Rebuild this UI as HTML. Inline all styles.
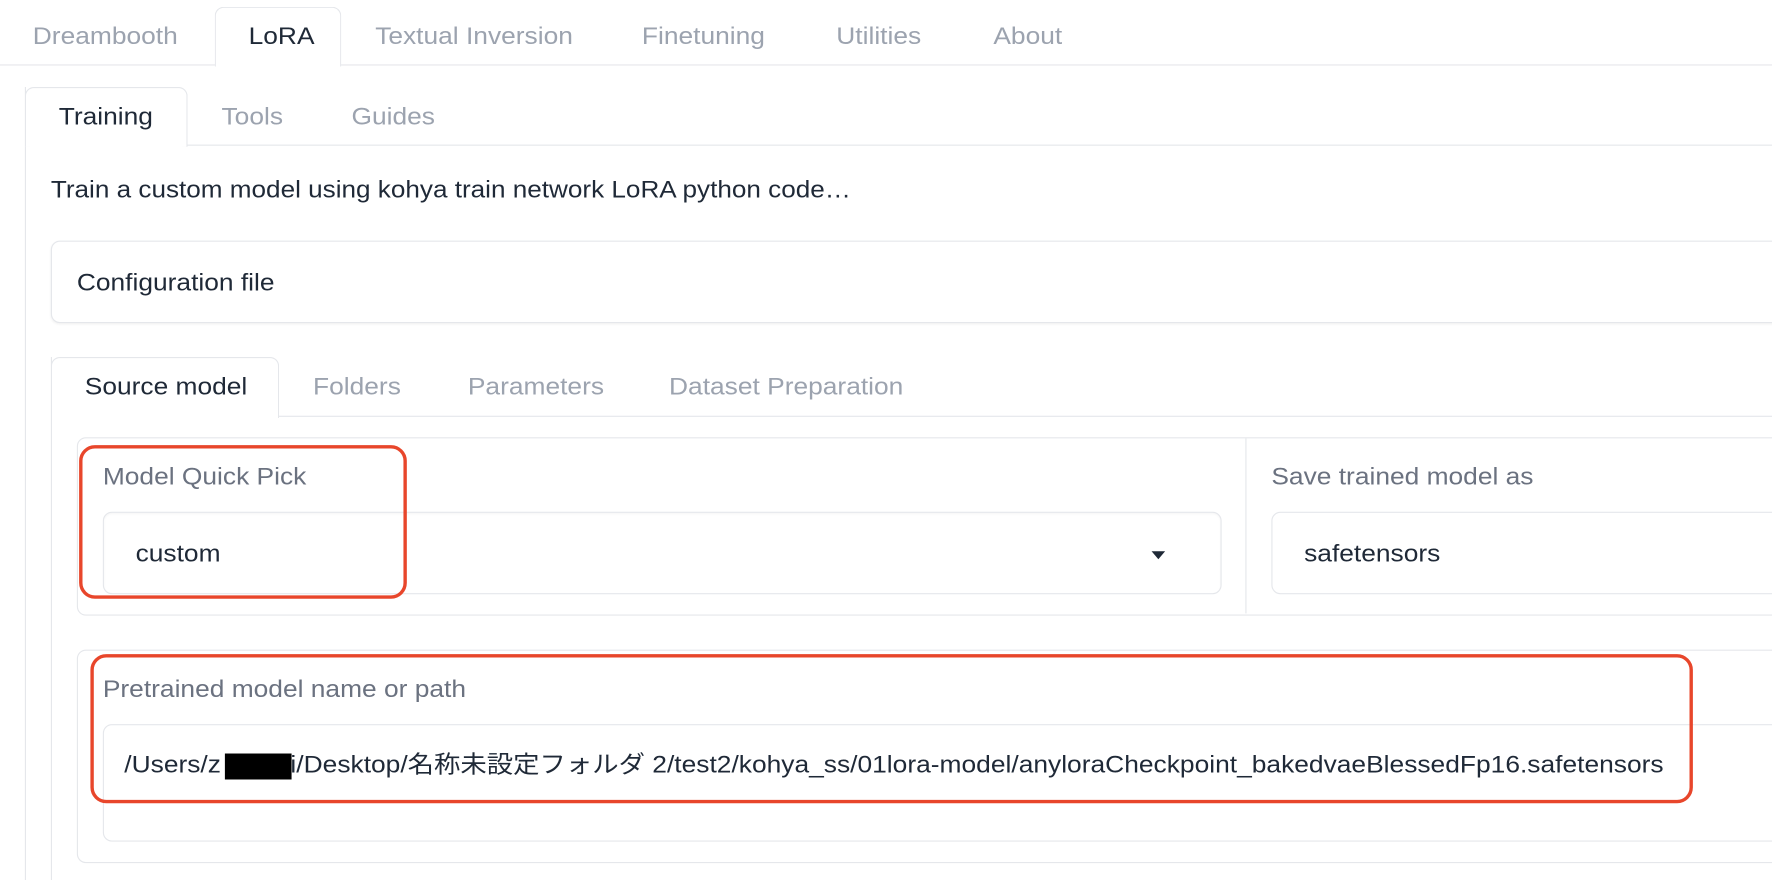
<!DOCTYPE html>
<html><head><meta charset="utf-8">
<style>
html,body{margin:0;padding:0;background:#fff;width:1772px;height:880px;overflow:hidden}
#w{position:absolute;left:0;top:0;width:1568px;height:779px;transform:scale(1.1301,1.1297);transform-origin:0 0;font-family:"Liberation Sans","Noto Sans CJK JP",sans-serif;}
.a{position:absolute}
.t{position:absolute;font-size:21px;line-height:24px;margin-top:1px;white-space:nowrap;transform:scaleX(1.11);transform-origin:0 50%}
.g{color:#9ca3af}
.d{color:#1f2937}
.l{color:#6b7280}
.box{position:absolute;border:1px solid #e5e7eb;border-radius:8px;background:#fff}
.ln{position:absolute;background:#e5e7eb}
.red{position:absolute;border:3px solid #e8462b;border-radius:14px}
</style></head><body><div id="w">
<div class="ln" style="left:0;top:57px;width:1568px;height:1px"></div>
<div class="a" style="left:190px;top:6px;width:110px;height:52px;border:1px solid #e5e7eb;border-bottom:none;border-radius:8px 8px 0 0;background:#fff"></div>
<div class="t g" style="left:29px;top:20px">Dreambooth</div>
<div class="t d" style="left:220px;top:20px">LoRA</div>
<div class="t g" style="left:332px;top:20px">Textual Inversion</div>
<div class="t g" style="left:568px;top:20px">Finetuning</div>
<div class="t g" style="left:740px;top:20px">Utilities</div>
<div class="t g" style="left:879px;top:20px">About</div>
<div class="ln" style="left:22px;top:77px;width:1px;height:702px"></div>
<div class="ln" style="left:165px;top:128px;width:1403px;height:1px"></div>
<div class="a" style="left:22px;top:77px;width:142px;height:52px;border:1px solid #e5e7eb;border-bottom:none;border-radius:8px 8px 0 0;background:#fff"></div>
<div class="t d" style="left:52px;top:91px">Training</div>
<div class="t g" style="left:196px;top:91px">Tools</div>
<div class="t g" style="left:311px;top:91px">Guides</div>
<div class="t d" style="left:45px;top:156px;transform:scaleX(1.1)">Train a custom model using kohya train network LoRA python code…</div>
<div class="box" style="left:45px;top:213px;width:1540px;height:71px;box-shadow:0 1px 2px rgba(0,0,0,.05)"></div>
<div class="t d" style="left:68px;top:238px">Configuration file</div>
<div class="ln" style="left:45px;top:316px;width:1px;height:463px"></div>
<div class="ln" style="left:246px;top:368px;width:1322px;height:1px"></div>
<div class="a" style="left:45px;top:316px;width:200px;height:53px;border:1px solid #e5e7eb;border-bottom:none;border-radius:8px 8px 0 0;background:#fff"></div>
<div class="t d" style="left:75px;top:330px">Source model</div>
<div class="t g" style="left:277px;top:330px">Folders</div>
<div class="t g" style="left:414px;top:330px">Parameters</div>
<div class="t g" style="left:592px;top:330px">Dataset Preparation</div>
<div class="box" style="left:68px;top:387px;width:1540px;height:156px"></div>
<div class="ln" style="left:1102px;top:388px;width:1px;height:155px"></div>
<div class="t l" style="left:91px;top:410px">Model Quick Pick</div>
<div class="box" style="left:91px;top:453px;width:988px;height:71px;box-shadow:inset 0 1px 2px rgba(0,0,0,.04)"></div>
<div class="t d" style="left:120px;top:478px">custom</div>
<div class="a" style="left:1019px;top:488px;width:0;height:0;border-left:6px solid transparent;border-right:6px solid transparent;border-top:7px solid #1f2937"></div>
<div class="t l" style="left:1125px;top:410px">Save trained model as</div>
<div class="box" style="left:1125px;top:453px;width:500px;height:71px"></div>
<div class="t d" style="left:1154px;top:478px">safetensors</div>
<div class="red" style="left:70px;top:394px;width:284px;height:130px"></div>
<div class="box" style="left:68px;top:575px;width:1540px;height:187px"></div>
<div class="t l" style="left:91px;top:598px">Pretrained model name or path</div>
<div class="box" style="left:91px;top:641px;width:1500px;height:102px"></div>
<div class="t d" style="left:110px;top:665px">/Users/z</div>
<div class="t d" style="left:257px;top:665px;transform:scaleX(1.111)">i/Desktop/名称未設定フォルダ 2/test2/kohya_ss/01lora-model/anyloraCheckpoint_bakedvaeBlessedFp16.safetensors</div>
<div class="a" style="left:199px;top:667px;width:59px;height:23px;background:#000"></div>
<div class="red" style="left:80px;top:579px;width:1412px;height:126px"></div>
</div></body></html>
